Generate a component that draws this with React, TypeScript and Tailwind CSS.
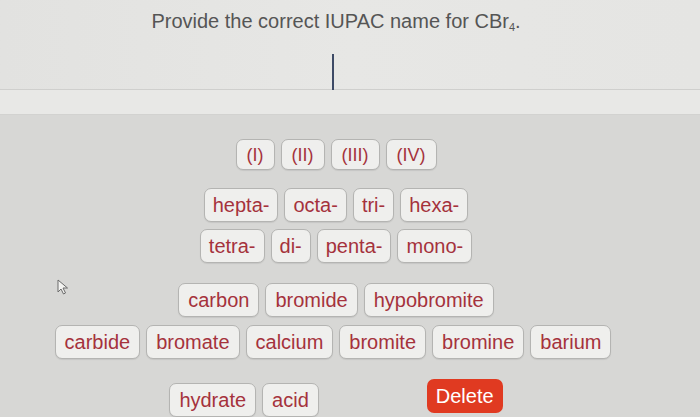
import React from 'react';

const rowOne = ['(I)', '(II)', '(III)', '(IV)'];
const prefixesA = ['hepta-', 'octa-', 'tri-', 'hexa-'];
const prefixesB = ['tetra-', 'di-', 'penta-', 'mono-'];
const wordsA = ['carbon', 'bromide', 'hypobromite'];
const wordsB = ['carbide', 'bromate', 'calcium', 'bromite', 'bromine', 'barium'];

type Size = 'sm' | 'md' | 'lg';

const sizeClass: Record<Size, string> = {
  sm: 'h-[31px] px-[10px] text-[18px]',
  md: 'h-[34px] px-[8px] text-[20px]',
  lg: 'h-[34px] px-[9px] text-[20px]',
};

function Tile({ label, size = 'lg' }: { label: string; size?: Size }) {
  return (
    <button
      className={
        sizeClass[size] +
        ' rounded-[7px] border border-[#b4b4b2] bg-[#efefed] text-[#a5323c] leading-none shadow-[0_1px_1px_rgba(0,0,0,0.08)]'
      }
    >
      {label}
    </button>
  );
}

function Row({ items, size, className }: { items: string[]; size?: Size; className?: string }) {
  return (
    <div className={'flex justify-center gap-[6px] ' + (className ?? '')}>
      {items.map((w) => (
        <Tile key={w} label={w} size={size} />
      ))}
    </div>
  );
}

export default function App() {
  return (
    <div className="relative w-[700px] h-[417px] overflow-hidden bg-[#d7d7d5] font-['Liberation_Sans',Arial,sans-serif]">
      {/* question header */}
      <div className="h-[90px] bg-gradient-to-r from-[#e2e2e0] via-[#e7e7e5] to-[#e5e5e3] border-b border-[#cfcfcd]">
        <div className="w-[672px] flex flex-col items-center">
          <p className="mt-[9px] text-[20px] leading-[24px] text-[#555555]">
            Provide the correct IUPAC name for CBr<sub className="text-[11px] align-baseline">4</sub>.
          </p>
          <div className="mt-[21px] ml-[-6px] w-[2px] h-[36px] bg-[#3d4a66]" />
        </div>
      </div>
      <div className="h-[25px] bg-[#e8e8e6] border-b border-[#d2d2d0]" />

      {/* tile bank */}
      <div className="w-[672px] flex flex-col">
        <Row items={rowOne} size="sm" className="mt-[24px]" />
        <Row items={prefixesA} size="md" className="mt-[18px]" />
        <Row items={prefixesB} size="md" className="mt-[7px]" />
        <Row items={wordsA} className="mt-[20px]" />
        <Row items={wordsB} className="mt-[8px] -ml-[6px]" />
        <div className="mt-[20px] flex justify-center items-start gap-[108px]">
          <div className="mt-[4px] flex gap-[6px]">
            <Tile label="hydrate" />
            <Tile label="acid" />
          </div>
          <button className="h-[34px] px-[9px] rounded-[7px] bg-[#e03a21] text-white text-[20px] leading-none">
            Delete
          </button>
        </div>
      </div>

      {/* mouse pointer */}
      <svg className="absolute left-[57px] top-[279px]" width="12" height="16" viewBox="0 0 12 16">
        <path d="M1 1 L1 13 L4 10 L6.5 15 L8.5 14 L6 9 L10.5 9 Z" fill="#f4f4f2" stroke="#6a6a6a" strokeWidth="1" />
      </svg>
    </div>
  );
}
